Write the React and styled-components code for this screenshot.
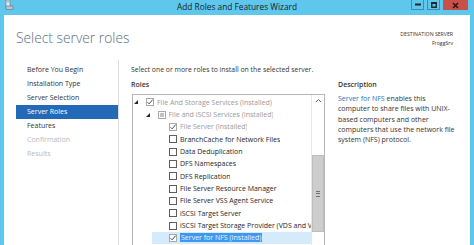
import styled, { createGlobalStyle } from 'styled-components';

const GlobalStyle = createGlobalStyle`
  html, body { margin: 0; padding: 0; background: #fff; }
  body { font-family: "Open Sans", "Noto Sans", sans-serif; }
`;

const steps = [
  { label: 'Before You Begin' },
  { label: 'Installation Type' },
  { label: 'Server Selection' },
  { label: 'Server Roles', active: true },
  { label: 'Features' },
  { label: 'Confirmation', disabled: true },
  { label: 'Results', disabled: true },
];

const roles = [
  { label: 'File And Storage Services (Installed)', level: 0, expander: true, state: 'checked', installed: true },
  { label: 'File and iSCSI Services (Installed)', level: 1, expander: true, state: 'partial', installed: true },
  { label: 'File Server (Installed)', level: 2, state: 'checked', installed: true },
  { label: 'BranchCache for Network Files', level: 2 },
  { label: 'Data Deduplication', level: 2 },
  { label: 'DFS Namespaces', level: 2 },
  { label: 'DFS Replication', level: 2 },
  { label: 'File Server Resource Manager', level: 2 },
  { label: 'File Server VSS Agent Service', level: 2 },
  { label: 'iSCSI Target Server', level: 2 },
  { label: 'iSCSI Target Storage Provider (VDS and VSS hardware providers)', level: 2 },
  { label: 'Server for NFS (Installed)', level: 2, state: 'checked', selected: true },
];

function ServerIcon() {
  return (
    <svg width="9" height="10" viewBox="0 0 9 10">
      <rect x="1" y="0" width="4" height="7" fill="#e9eef2" stroke="#6f8797" strokeWidth="0.8" />
      <rect x="1" y="6" width="7" height="3.5" fill="#b9c6cf" stroke="#6f8797" strokeWidth="0.8" />
      <rect x="2" y="1.5" width="2" height="0.8" fill="#6f8797" />
    </svg>
  );
}

function Check({ state }) {
  return (
    <CheckBox $installed={state !== undefined}>
      {state === 'checked' && (
        <svg width="8" height="8" viewBox="0 0 8 8">
          <path d="M1.5 4.2 L3.2 5.9 L6.6 1.6" fill="none" stroke="#555" strokeWidth="1" />
        </svg>
      )}
      {state === 'partial' && <Partial />}
    </CheckBox>
  );
}

export default function App() {
  return (
    <>
      <GlobalStyle />
      <Window>
        <TitleBar>
          <TitleIcon><ServerIcon /></TitleIcon>
          <Title>Add Roles and Features Wizard</Title>
          <Controls>
            <CtrlButton>
              <svg width="6" height="3" viewBox="0 0 6 3"><rect x="0" y="0.5" width="6" height="2" fill="#1b2a33" /></svg>
            </CtrlButton>
            <CtrlButton>
              <svg width="6" height="6" viewBox="0 0 6 6"><rect x="0.75" y="0.75" width="4.5" height="4.5" fill="none" stroke="#1b2a33" strokeWidth="1.5" /><rect x="0" y="0" width="6" height="2" fill="#1b2a33" /></svg>
            </CtrlButton>
            <CloseButton>
              <svg width="7" height="7" viewBox="0 0 7 7"><path d="M1 1 L6 6 M6 1 L1 6" stroke="#3a1010" strokeWidth="1.6" /></svg>
            </CloseButton>
          </Controls>
        </TitleBar>
        <Client>
          <Header>
            <Heading>Select server roles</Heading>
            <Destination>
              <DestLine>DESTINATION SERVER</DestLine>
              <DestLine>FroggSrv</DestLine>
            </Destination>
          </Header>
          <Body>
            <Nav>
              {steps.map((s) => (
                <NavItem key={s.label} $active={s.active} $disabled={s.disabled}>{s.label}</NavItem>
              ))}
            </Nav>
            <Main>
              <Intro>Select one or more roles to install on the selected server.</Intro>
              <Columns>
                <RolesColumn>
                  <SectionLabel>Roles</SectionLabel>
                  <ListBox>
                    <Tree>
                      {roles.map((r) => (
                        <Row key={r.label} $level={r.level}>
                          <RowInner $selected={r.selected}>
                            <Expander>{r.expander && <Arrow />}</Expander>
                            <Check state={r.state} />
                            <RowText $installed={r.installed}>
                              {r.selected ? <Highlight>{r.label}</Highlight> : r.label}
                            </RowText>
                          </RowInner>
                        </Row>
                      ))}
                    </Tree>
                    <ScrollBar>
                      <ScrollArrow>
                        <svg width="7" height="5" viewBox="0 0 7 5"><path d="M1 4 L3.5 1.5 L6 4" fill="none" stroke="#606060" strokeWidth="1" /></svg>
                      </ScrollArrow>
                      <Thumb>
                        <Grip />
                      </Thumb>
                    </ScrollBar>
                  </ListBox>
                </RolesColumn>
                <DescColumn>
                  <SectionLabel>Description</SectionLabel>
                  <DescText>
                    <Link>Server for NFS</Link> enables this<br />
                    computer to share files with UNIX-<br />
                    based computers and other<br />
                    computers that use the network file<br />
                    system (NFS) protocol.
                  </DescText>
                </DescColumn>
              </Columns>
            </Main>
          </Body>
        </Client>
      </Window>
    </>
  );
}

const Window = styled.div`
width: 474px;
height: 245px;
background: #5fc7eb;
display: flex;
flex-direction: column;
padding: 0 4px;
box-sizing: border-box;
overflow: hidden;
`;

const TitleBar = styled.div`
height: 15px;
flex: none;
display: grid;
grid-template-columns: 1fr auto 1fr;
align-items: start;
`;

const TitleIcon = styled.div`
padding-left: 1px;
line-height: 0;
`;

const Title = styled.div`
font-size: 8.3px;
line-height: 13px;
color: #15232c;
white-space: nowrap;
`;

const Controls = styled.div`
justify-self: end;
display: flex;
align-items: stretch;
height: 10px;
gap: 3px;
margin-right: 2px;
`;

const CtrlButton = styled.div`
width: 13px;
display: flex;
align-items: center;
justify-content: center;
background: #5fc7eb;
border: 1px solid #3d8fb0;
border-top: none;
box-sizing: border-box;
`;

const CloseButton = styled.div`
width: 25px;
display: flex;
align-items: center;
justify-content: center;
background: #c7504a;
`;

const Client = styled.div`
flex: 1;
background: #fff;
display: flex;
flex-direction: column;
min-height: 0;
min-width: 0;
`;

const Header = styled.div`
display: flex;
justify-content: space-between;
align-items: flex-start;
padding: 13px 17px 0 12px;
height: 32px;
flex: none;
`;

const Heading = styled.div`
font-size: 13.8px;
font-weight: 300;
color: #5b6f7e;
line-height: 20px;
`;

const Destination = styled.div`
text-align: right;
padding-top: 2px;
color: #333;
`;

const DestLine = styled.div`
font-size: 5.2px;
line-height: 9px;
`;

const Body = styled.div`
flex: 1;
display: flex;
min-height: 0;
`;

const Nav = styled.div`
width: 102px;
margin-left: 12px;
border-right: 1px solid #dcdcdc;
padding-top: 3px;
flex: none;
`;

const NavItem = styled.div`
height: 14px;
line-height: 14px;
padding-left: 11px;
font-size: 7px;
color: ${(p) => (p.$active ? '#fff' : p.$disabled ? '#b8b8b8' : '#333')};
background: ${(p) => (p.$active ? '#2269b8' : 'transparent')};
`;

const Main = styled.div`
flex: 1;
padding: 5px 0 0 12px;
display: flex;
flex-direction: column;
min-width: 0;
`;

const Intro = styled.div`
font-size: 6.9px;
line-height: 10px;
color: #333;
`;

const Columns = styled.div`
display: flex;
gap: 13px;
padding-top: 5px;
`;

const RolesColumn = styled.div`
width: 194px;
flex: none;
`;

const DescColumn = styled.div`
flex: 1;
min-width: 0;
`;

const SectionLabel = styled.div`
font-size: 7px;
font-weight: 600;
line-height: 10px;
color: #333;
`;

const ListBox = styled.div`
margin: 4px 0 0 1px;
height: 160px;
border: 1px solid #b3b6bb;
display: flex;
overflow: hidden;
`;

const Tree = styled.div`
flex: 1;
padding-top: 1px;
min-width: 0;
overflow: hidden;
`;

const Row = styled.div`
height: 12.35px;
display: flex;
align-items: center;
padding-left: ${(p) => p.$level * 11.5}px;
white-space: nowrap;
`;

const RowInner = styled.div`
flex: 1;
min-width: 0;
height: 100%;
display: flex;
align-items: center;
margin-left: -4px;
padding-left: 4px;
background: ${(p) => (p.$selected ? '#d5ebfb' : 'transparent')};
`;

const Expander = styled.div`
width: 12px;
flex: none;
display: flex;
align-items: center;
padding-left: 1px;
`;

const Arrow = styled.div`
width: 0;
height: 0;
border-left: 4px solid transparent;
border-bottom: 4px solid #262626;
`;

const CheckBox = styled.div`
width: 8px;
height: 8px;
flex: none;
box-sizing: border-box;
border: 1px solid ${(p) => (p.$installed ? '#a8a8a8' : '#5e5e5e')};
background: #fff;
display: flex;
align-items: center;
justify-content: center;
line-height: 0;
& > svg { margin: -1px; }
`;

const Partial = styled.div`
width: 4px;
height: 4px;
background: #c2c2c2;
`;

const RowText = styled.div`
margin-left: 3px;
font-size: 7px;
color: ${(p) => (p.$installed ? '#9a9a9a' : '#262626')};
overflow: hidden;
`;

const Highlight = styled.span`
background: #3e98f0;
color: #eaf4ff;
padding: 0 1px;
`;

const ScrollBar = styled.div`
width: 12px;
flex: none;
border-left: 1px solid #e6e6e6;
display: flex;
flex-direction: column;
`;

const ScrollArrow = styled.div`
height: 11px;
display: flex;
align-items: center;
justify-content: center;
`;

const Thumb = styled.div`
margin-top: 49px;
height: 75px;
background: #cdcdcd;
border: 1px solid #bdbdbd;
display: flex;
align-items: center;
justify-content: center;
`;

const Grip = styled.div`
width: 4px;
height: 4px;
border-top: 1px solid #707070;
border-bottom: 1px solid #707070;
background: linear-gradient(#707070, #707070) center / 100% 1px no-repeat;
`;

const DescText = styled.div`
margin-top: 4px;
font-size: 7px;
line-height: 10.3px;
color: #333;
white-space: nowrap;
`;

const Link = styled.span`
color: #2a72c0;
`;
